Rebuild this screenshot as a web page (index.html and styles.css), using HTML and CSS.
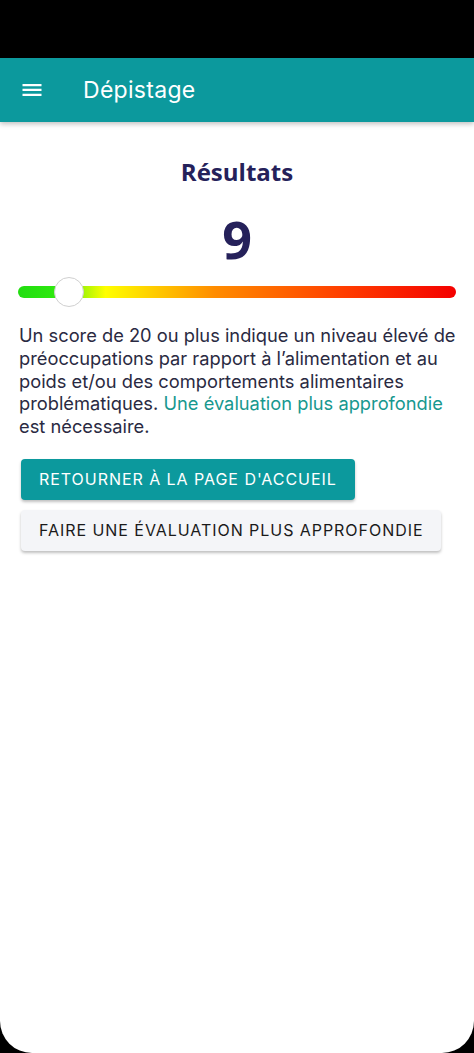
FILE: index.html
```html
<!DOCTYPE html>
<html lang="fr">
<head>
    <meta charset="UTF-8">
    <meta name="viewport" content="width=device-width, initial-scale=1.0">
    <title>Dépistage</title>
    <link rel="stylesheet" href="styles.css">
</head>
<body>
    <div class="status-bar"></div>
    <div class="screen">
        <header class="app-bar">
            <button class="menu-btn" aria-label="Menu">
                <svg width="24" height="24" viewBox="0 0 24 24">
                    <path d="M2.5 18h19v-2.2h-19V18zm0-5h19v-2.2h-19V13zm0-7v2.2h19V6h-19z" fill="#fff"/>
                </svg>
            </button>
            <h1 class="app-title">Dépistage</h1>
        </header>

        <main class="content">
            <h2 class="results-title">Résultats</h2>
            <div class="score">9</div>

            <div class="slider">
                <div class="slider-track"></div>
                <div class="slider-thumb" style="left: 36px;"></div>
            </div>

            <p class="explanation">Un score de 20 ou plus indique un niveau élevé de préoccupations par rapport à l’alimentation et au poids et/ou des comportements alimentaires problématiques. <a href="#" class="link">Une évaluation plus approfondie</a> est nécessaire.</p>

            <div class="actions">
                <button class="btn btn-primary">Retourner à la page d'accueil</button>
                <button class="btn btn-secondary">Faire une évaluation plus approfondie</button>
            </div>
        </main>
    </div>
</body>
</html>
```

FILE: styles.css
```css
html, body {
    margin: 0;
    padding: 0;
    background-color: #000;
}

body {
    font-family: Inter, "Noto Sans", sans-serif;
    width: 474px;
    height: 1053px;
    display: flex;
    flex-direction: column;
    overflow: hidden;
}

.status-bar {
    height: 58px;
    flex-shrink: 0;
    background-color: #000;
}

.screen {
    flex: 1;
    background-color: #fff;
    border-radius: 0 0 32px 32px;
    overflow: hidden;
}

.app-bar {
    height: 64px;
    display: flex;
    align-items: center;
    background-color: #0c999d;
    box-shadow: 0 2px 5px rgba(0, 0, 0, 0.25);
    position: relative;
}

.menu-btn {
    width: 24px;
    height: 24px;
    margin-left: 20px;
    padding: 0;
    border: none;
    background: none;
    display: flex;
}

.app-title {
    margin: 0 0 0 39px;
    font-size: 23px;
    font-weight: 400;
    color: #fff;
    letter-spacing: 0.3px;
}

.content {
    padding: 0 18px;
}

.results-title {
    margin: 34px 0 0;
    text-align: center;
    font-family: "Open Sans", sans-serif;
    font-size: 24px;
    font-weight: 700;
    color: #25215a;
    line-height: 32px;
}

.score {
    margin-top: 23px;
    text-align: center;
    font-family: "Open Sans", sans-serif;
    font-size: 52px;
    font-weight: 700;
    color: #25215a;
    line-height: 56px;
}

.slider {
    position: relative;
    height: 30px;
    margin-top: 10px;
    display: flex;
    align-items: center;
}

.slider-track {
    width: 100%;
    height: 12px;
    border-radius: 6px;
    background: linear-gradient(to right, #22dd11 0%, #2de80f 8%, #ffff00 20%, #ff8c00 45%, #ff3c00 75%, #f40000 100%);
}

.slider-thumb {
    position: absolute;
    top: 0;
    width: 28px;
    height: 28px;
    border-radius: 50%;
    background-color: #fff;
    border: 1px solid #d0d0d0;
}

.explanation {
    margin: 17px 0 0 1px;
    font-size: 18.3px;
    line-height: 22.8px;
    color: #2a2a42;
}

.link {
    color: #17988f;
    text-decoration: none;
}

.actions {
    margin-top: 21px;
    display: flex;
    flex-direction: column;
    align-items: flex-start;
    gap: 10px;
    padding-left: 3px;
}

.btn {
    height: 41px;
    padding: 0 18px;
    border: none;
    border-radius: 4px;
    font-family: Inter, "Noto Sans", sans-serif;
    font-size: 16px;
    letter-spacing: 0.95px;
    text-transform: uppercase;
    box-shadow: 0 2px 3px rgba(0, 0, 0, 0.25);
}

.btn-primary {
    background-color: #0c999d;
    color: #fff;
}

.btn-secondary {
    background-color: #f4f5f8;
    color: #1a1a1a;
}
```
